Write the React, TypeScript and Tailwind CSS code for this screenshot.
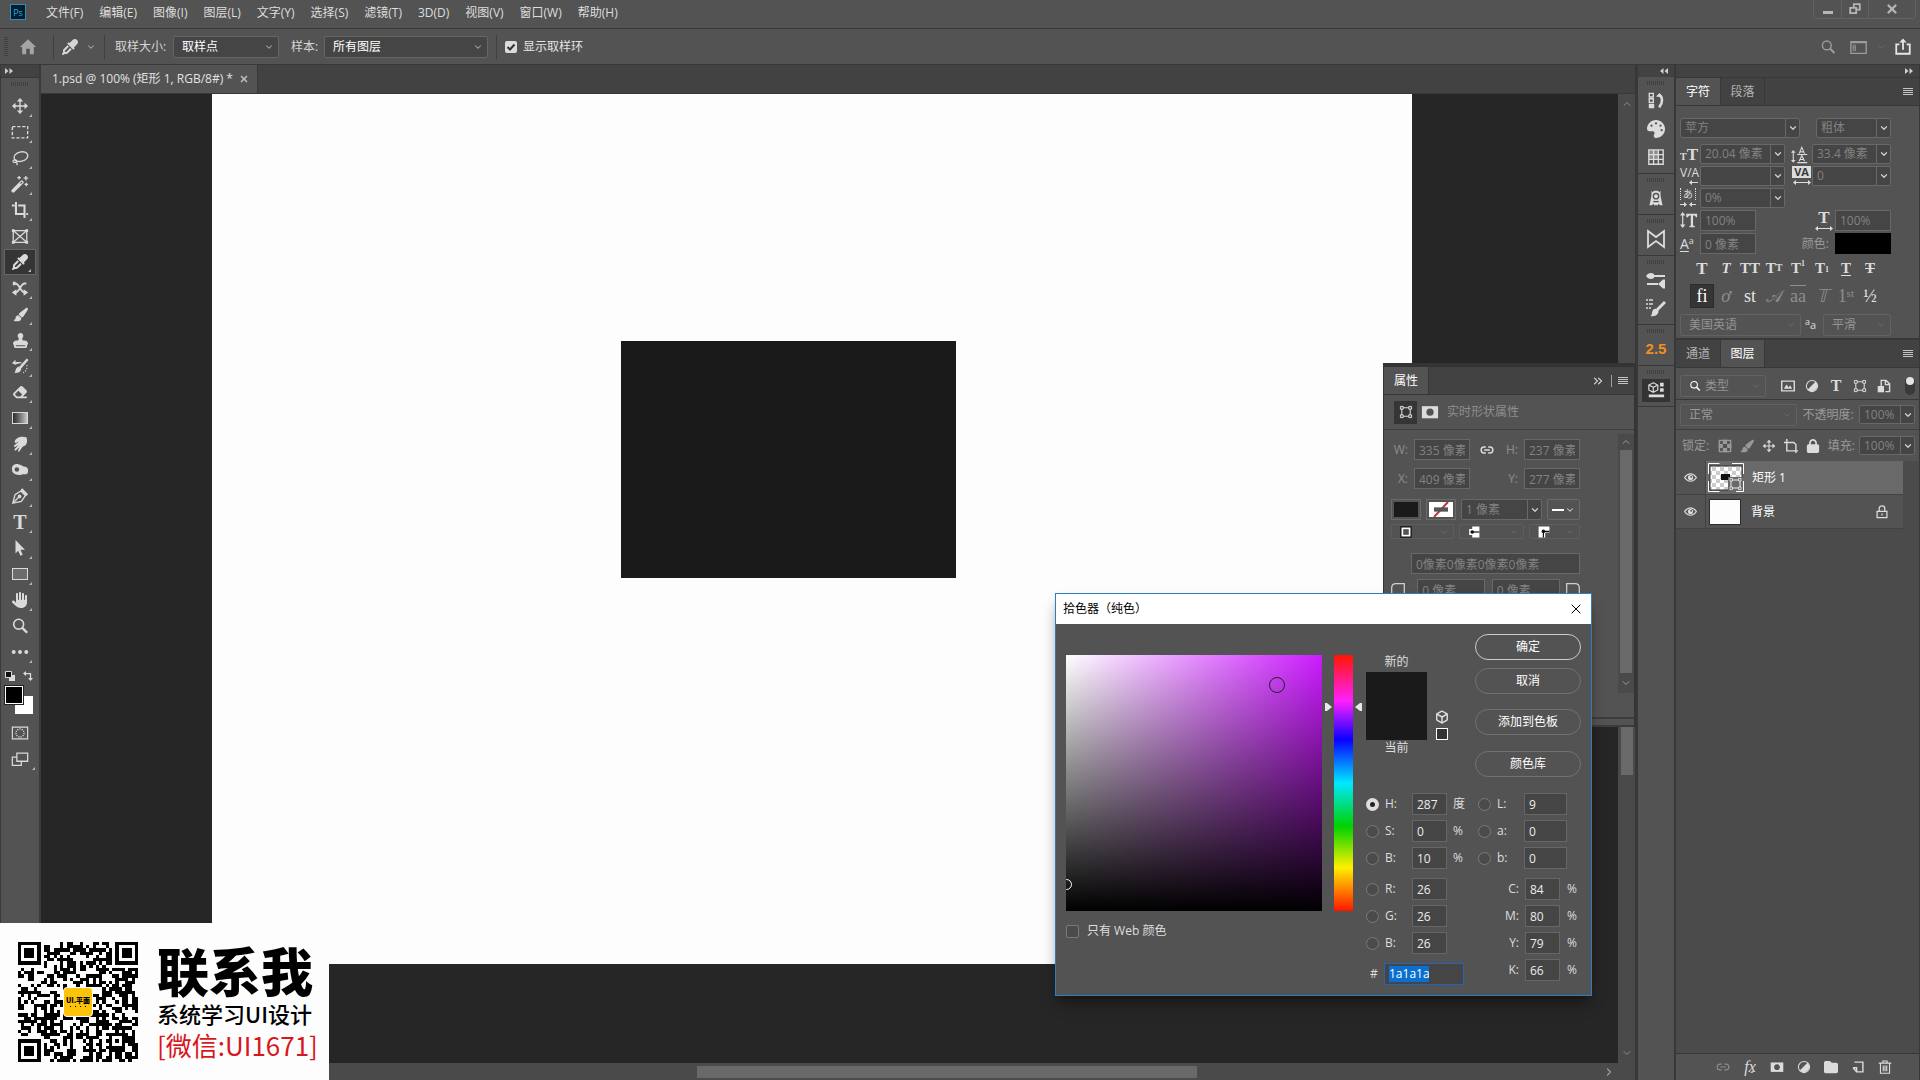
import React from 'react';
import {
  FaEyeDropper,
  FaEraser,
  FaStamp,
  FaHand,
  FaPaintbrush,
  FaPalette,
  FaFolder,
  FaLock,
} from 'react-icons/fa6';
import { ChevronDown, ChevronUp, ChevronRight, ChevronsRight, Link2, Box, X } from 'lucide-react';

type IconProps = { children: React.ReactNode; className?: string };

const Icon = ({ children, className = 'size-5' }: IconProps) => (
  <svg
    viewBox="0 0 20 20"
    fill="none"
    stroke="currentColor"
    strokeWidth="1.5"
    className={`shrink-0 ${className}`}
    aria-hidden="true"
  >
    {children}
  </svg>
);

const menus = [
  '文件(F)', '编辑(E)', '图像(I)', '图层(L)', '文字(Y)', '选择(S)',
  '滤镜(T)', '3D(D)', '视图(V)', '窗口(W)', '帮助(H)',
];

const MoveIcon = ({ className }: { className?: string }) => (
  <Icon className={className}>
    <path d="M10 3v14M3 10h14" />
    <path d="M10 1l3.500 4h-7zM10 19l3.500-4h-7zM1 10l4-3.500v7zM19 10l-4-3.500v7z" fill="currentColor" stroke="none" />
  </Icon>
);

const FrameIcon = ({ className }: { className?: string }) => (
  <Icon className={className}>
    <path d="M4 4h12v12H4z" strokeWidth="1.5" />
    <path d="M2 2h4v4H2zM14 2h4v4h-4zM2 14h4v4H2zM14 14h4v4h-4z" fill="#535353" strokeWidth="1.400" />
  </Icon>
);

const AdjustIcon = ({ className }: { className?: string }) => (
  <Icon className={className}>
    <circle cx="10" cy="10" r="8" />
    <path d="M4.500 15.500A7.800 7.800 0 0 0 15.500 4.500z" fill="currentColor" stroke="none" />
    <path d="M15.500 4.500L4.500 15.500" />
  </Icon>
);

const MaskIcon = ({ className }: { className?: string }) => (
  <Icon className={className}>
    <path d="M1 3.500h18v13.500H1z" fill="currentColor" stroke="none" />
    <circle cx="10" cy="10.200" r="4" fill="#535353" stroke="none" />
  </Icon>
);

const SearchIcon = ({ className }: { className?: string }) => (
  <Icon className={className}>
    <circle cx="8.500" cy="8" r="5.500" strokeWidth="1.800" />
    <path d="M12.500 12l5.500 5.500" strokeWidth="2.600" />
  </Icon>
);

const MenuLines = () => (
  <svg viewBox="0 0 10 8" className="h-2 w-2.5" stroke="#c4c4c4" aria-hidden="true">
    <path d="M0 .5h10M0 2.500h10M0 4.500h10M0 6.500h10" />
  </svg>
);

const DoubleArrow = ({ flip = false }: { flip?: boolean }) => (
  <svg viewBox="0 0 8 6" className={flip ? 'h-1.5 w-2 rotate-180' : 'h-1.5 w-2'} fill="#d0d0d0" aria-hidden="true">
    <path d="M0 0l3.500 3L0 6zM4.500 0L8 3 4.500 6z" />
  </svg>
);

const Grip = () => (
  <div className="mx-auto h-1 w-[18px] bg-[repeating-linear-gradient(90deg,#414141_0_1px,#535353_1px_2px)]" />
);

const CubeIcon = () => <Box className="size-3.5" strokeWidth={2.5} aria-hidden="true" />;

const tools = [
  { name: '移动', icon: <MoveIcon className="size-[18px]" />, more: true },
  {
    name: '矩形选框',
    icon: <Icon className="size-[18px]"><path d="M1.500 4h17v12.500h-17z" strokeDasharray="3.500 2" /></Icon>,
    more: true,
  },
  {
    name: '套索',
    icon: (
      <Icon className="size-[18px]">
        <ellipse cx="11" cy="8.500" rx="7.800" ry="5.200" transform="rotate(-14 11 8.500)" />
        <path d="M5 12c-2 0-3.500 1-2.500 2.200s3 .8 3.500-.3-.3-1.700-1-1.900M6 14c1 1.500 1 3 .3 4" strokeWidth="1.300" />
      </Icon>
    ),
    more: true,
  },
  {
    name: '魔棒',
    icon: (
      <Icon className="size-[18px]">
        <path d="M2.500 17.500L12 8" strokeWidth="4" strokeLinecap="round" />
        <path d="M10.500 9.500l1.800-1.800" stroke="#535353" strokeWidth="1.300" />
        <path d="M9 1v4M7 3h4M16.500 1v5M14 3.500h5M17 8.500v4M15 10.500h4" strokeWidth="1.400" />
      </Icon>
    ),
    more: true,
  },
  {
    name: '裁剪',
    icon: <Icon className="size-[18px]"><path d="M1 5h3M5.500 1v13.500H16M8 5h7v14M17 14.500h2" strokeWidth="2.300" /></Icon>,
    more: true,
  },
  {
    name: '图框',
    icon: (
      <Icon className="size-[18px]">
        <path d="M2.500 4h15v13h-15zM2.500 4l15 13M17.500 4l-15 13" strokeWidth="1.400" />
        <path d="M1 2.500h3v3H1zM16 2.500h3v3h-3zM1 15.500h3v3H1zM16 15.500h3v3h-3z" fill="currentColor" stroke="none" />
      </Icon>
    ),
    more: false,
  },
  { name: '吸管', icon: <FaEyeDropper className="size-4" />, more: true },
  {
    name: '内容感知移动',
    icon: (
      <Icon className="size-[18px]">
        <path d="M3 5h2c4 0 6 10 10 10h2M3 15h2c4 0 6-10 10-10h2" strokeWidth="2" />
        <path d="M14 11.500l5 3.500-5 3.500zM6 11.500L1 15l5 3.500zM2 3h3v4H2z" fill="currentColor" stroke="none" />
      </Icon>
    ),
    more: true,
  },
  { name: '画笔', icon: <FaPaintbrush className="size-[15px]" />, more: true },
  { name: '仿制图章', icon: <FaStamp className="size-[15px]" />, more: true },
  {
    name: '历史记录画笔',
    icon: (
      <Icon className="size-[18px]">
        <path d="M18.500 2.500L10 12" strokeWidth="2.800" />
        <path d="M9.500 11c2 .8 2.500 2.500 1 4.500S5.500 18 3.500 17.500c2-1 1-3 2.500-5 .9-1.200 2-2 3.500-1.500zM1 7l4-4v3c3-1 6-.5 8 1-3-.5-5.500 0-8 1.500z" fill="currentColor" stroke="none" />
        <path d="M17.500 9c1 4-1 7-4 8.500" strokeDasharray="1.300 1.700" strokeWidth="1.300" />
      </Icon>
    ),
    more: true,
  },
  { name: '橡皮擦', icon: <FaEraser className="size-4" />, more: true },
  { name: '渐变', icon: <span className="block h-3 w-4 border border-[#dadada] bg-linear-to-r from-[#2d2d2d] to-[#c8c8c8]" />, more: true },
  {
    name: '涂抹',
    icon: (
      <Icon className="size-[18px]">
        <path d="M7 3.500c3-2 7-1.800 10-1 1.500 3 1 6.500-.5 8.500-2 1.500-3.500 1.500-4 2.500L9 18.500 7.500 18l2-4.500-4.500 4L3.500 16l5-5-4.500 2.500L3 12l5.500-4.500c-2 .5-3 1.500-4.500 1C4 6 5 4.500 7 3.500z" fill="currentColor" stroke="none" />
      </Icon>
    ),
    more: true,
  },
  {
    name: '海绵',
    icon: (
      <Icon className="size-[18px]">
        <path d="M1 9c0-4 3-6 7-5.500 3 .4 5 2.500 8 3 2 .5 3 2 3 4.500s-1.500 4-4 3.700c-2-.2-3 .8-6 .8-5 0-8-2.500-8-6.500z" fill="currentColor" stroke="none" />
        <circle cx="6.500" cy="9.500" r="2.500" fill="#535353" stroke="none" />
      </Icon>
    ),
    more: true,
  },
  {
    name: '钢笔',
    icon: (
      <Icon className="size-[18px]">
        <path d="M2 18L4.500 8.500 11 4.500l5 5L11.500 16z" />
        <path d="M2.500 17.500l6-6" />
        <circle cx="9.500" cy="10.500" r="1.300" fill="currentColor" />
        <path d="M12.500 1.500l6.500 6.500-2 2L10.500 3.500z" fill="currentColor" stroke="none" />
      </Icon>
    ),
    more: true,
  },
  { name: '横排文字', icon: <span className="font-['Liberation_Serif',serif] text-xl leading-5 font-bold">T</span>, more: true },
  {
    name: '路径选择',
    icon: <Icon className="size-[18px]"><path d="M5 1l10.500 11h-5l2.500 5.500-2.500 1.200L8 13l-3 3z" fill="currentColor" stroke="none" /></Icon>,
    more: true,
  },
  { name: '矩形', icon: <span className="block h-3 w-4 border border-[#dadada] bg-[#6c6c6c]" />, more: true },
  { name: '抓手', icon: <FaHand className="size-4" />, more: true },
  { name: '缩放', icon: <SearchIcon className="size-[18px]" />, more: false },
  {
    name: '编辑工具栏',
    icon: (
      <Icon className="size-[18px]">
        <circle cx="3" cy="10" r="2.200" fill="currentColor" stroke="none" />
        <circle cx="10" cy="10" r="2.200" fill="currentColor" stroke="none" />
        <circle cx="17" cy="10" r="2.200" fill="currentColor" stroke="none" />
      </Icon>
    ),
    more: true,
  },
];

const Corner = () => (
  <svg viewBox="0 0 4 4" className="absolute right-1 bottom-0.5 size-[3px]" fill="#b8b8b8" aria-hidden="true">
    <path d="M4 0v4H0z" />
  </svg>
);

type FieldProps = { label: string; value: string; className: string };

const Field = ({ label, value, className }: FieldProps) => (
  <input
    aria-label={label}
    defaultValue={value}
    className={`min-w-0 border border-[#686868] bg-[#454545] px-1 text-xs text-[#828282] outline-none ${className}`}
  />
);

// editable value with a drop-down arrow at its right end
const Combo = ({ label, value, className }: FieldProps) => (
  <div className={`flex rounded-xs border border-[#686868] bg-[#454545] ${className}`}>
    <input
      aria-label={label}
      defaultValue={value}
      className="w-full min-w-0 flex-1 bg-transparent px-1 text-xs text-[#828282] outline-none"
    />
    <button aria-label={`${label}选项`} className="flex w-3.5 shrink-0 items-center justify-center border-l border-[#686868] text-[#cfcfcf]">
      <ChevronDown className="size-2.5" strokeWidth={3} />
    </button>
  </div>
);

type SelectProps = { label: string; value?: string; className: string; arrow?: string; children?: React.ReactNode };

const Select = ({ label, value = '', className, arrow = 'text-[#666666]', children }: SelectProps) => (
  <div className={`relative flex items-center rounded-xs border ${className}`}>
    {children}
    <select aria-label={label} className="h-full w-full min-w-0 flex-1 appearance-none bg-transparent outline-none">
      <option>{value}</option>
    </select>
    <ChevronDown className={`pointer-events-none absolute right-1 size-2.5 ${arrow}`} strokeWidth={2.5} />
  </div>
);

const MenuBar = () => (
  <header className="flex h-[29px] shrink-0 items-start border-b border-[#383838]">
    <div className="mt-1 ml-2.5 flex h-4 w-4 items-center justify-center border border-[#2c8fc0] bg-[#001d2c] text-[9px] leading-none text-[#31a8e0]">
      Ps
    </div>
    <nav className="ml-5 flex gap-4">
      {menus.map((menu) => (
        <button key={menu} className="h-[25px] text-[#dedede]">{menu}</button>
      ))}
    </nav>
    <div className="mr-1 ml-auto flex h-[19px] rounded-b-sm border border-t-0 border-[#626262] text-[#b5b5b5]">
      <button aria-label="最小化" className="flex w-7 items-center justify-center border-r border-[#626262]">
        <span className="mt-1.5 h-[3px] w-2.5 bg-[#b5b5b5]" />
      </button>
      <button aria-label="还原" className="flex w-[27px] items-center justify-center border-r border-[#626262]">
        <Icon className="size-3">
          <path d="M8 2h10v9H8z" strokeWidth="3" />
          <path d="M2 8h10v9H2z" fill="#535353" strokeWidth="3" />
        </Icon>
      </button>
      <button aria-label="关闭" className="flex w-[46px] items-center justify-center">
        <X className="size-3.5" strokeWidth={4} />
      </button>
    </div>
  </header>
);

const OptionsBar = () => (
  <div className="flex h-9 shrink-0 items-center border-b border-[#383838] text-[#d6d6d6]">
    <div className="ml-1 h-5 w-1 bg-[repeating-linear-gradient(180deg,#414141_0_1px,#535353_1px_2px)]" />
    <button aria-label="主页" className="ml-[11px] text-[#a5a5a5]">
      <Icon className="size-[18px]"><path d="M10 1.500L1 10h2.500v8h4.500v-6h4v6h4.500v-8H19z" fill="currentColor" stroke="none" /></Icon>
    </button>
    <div className="ml-4 h-6 border-l border-[#404040]" />
    <button aria-label="吸管预设" className="ml-2 flex items-center">
      <FaEyeDropper className="size-4" />
      <ChevronDown className="ml-2 size-2.5 text-[#a8a8a8]" strokeWidth={2.5} />
    </button>
    <div className="ml-2 h-6 border-l border-[#404040]" />
    <span className="ml-2.5 w-[58px]">取样大小:</span>
    <Select label="取样大小" value="取样点" className="h-[22px] w-[106px] border-[#666666] bg-[#454545] pl-2 text-white" arrow="text-[#a8a8a8]" />
    <span className="ml-3 w-[33px]">样本:</span>
    <Select label="样本" value="所有图层" className="h-[22px] w-[164px] border-[#666666] bg-[#454545] pl-2 text-white" arrow="text-[#a8a8a8]" />
    <div className="ml-2 h-6 border-l border-[#404040]" />
    <label className="ml-2 flex items-center gap-1.5 text-[#e4e4e4]">
      <span className="relative flex size-3">
        <input type="checkbox" defaultChecked className="size-3 appearance-none rounded-xs bg-[#dcdcdc]" />
        <svg viewBox="0 0 12 12" className="pointer-events-none absolute inset-0" fill="none" stroke="#333" strokeWidth="2" aria-hidden="true">
          <path d="M2.500 6l2.500 2.500 4.500-5" />
        </svg>
      </span>
      显示取样环
    </label>
    <div className="mr-2 ml-auto flex items-center">
      <button aria-label="搜索" className="text-[#9c9c9c]"><SearchIcon className="size-4" /></button>
      <button aria-label="工作区" className="ml-3.5 flex items-center text-[#9c9c9c]">
        <Icon className="size-[18px]">
          <path d="M1 4h17v13H1zM1 5h17" />
          <path d="M3.500 8h2.500v6H3.500zM3.500 11H6" strokeWidth="1" />
        </Icon>
        <ChevronDown className="ml-2 size-2.5 text-[#666666]" strokeWidth={2.5} />
      </button>
      <button aria-label="共享" className="ml-2 text-[#e6e6e6]">
        <Icon className="size-[18px]">
          <path d="M6 7H2.500v10.500h15V7H14M10 13V3" strokeWidth="2" />
          <path d="M10 .5l4 4.500H6z" fill="currentColor" stroke="none" />
        </Icon>
      </button>
    </div>
  </div>
);

const ToolBar = () => (
  <aside className="flex w-[41px] shrink-0 flex-col border-r-2 border-l border-[#3a3a3a] text-[#dadada]">
    <div className="flex h-3 items-center bg-[#424242] pl-1"><DoubleArrow /></div>
    <div className="flex h-4 items-start border-t border-[#383838] pt-1"><Grip /></div>
    {tools.map((tool) => (
      <button
        key={tool.name}
        aria-label={tool.name}
        className={
          tool.name === '吸管'
            ? 'relative ml-[3px] flex h-[26px] w-8 items-center justify-center border border-[#656565] bg-[#353535]'
            : 'relative ml-[3px] flex h-[26px] w-8 items-center justify-center'
        }
      >
        {tool.icon}
        {tool.more && <Corner />}
      </button>
    ))}
    <div className="flex justify-between pt-1.5 pr-1.5 pl-1">
      <button aria-label="默认颜色">
        <Icon className="size-2.5">
          <path d="M8 8h12v12H8z" fill="currentColor" stroke="none" />
          <path d="M1 1h12v12H1z" fill="#111" strokeWidth="2" />
        </Icon>
      </button>
      <button aria-label="切换颜色">
        <Icon className="size-2.5">
          <path d="M4 5h11v11" strokeWidth="2.500" />
          <path d="M0 5l6-5v10zM15 20l-5-6h10z" fill="currentColor" stroke="none" />
        </Icon>
      </button>
    </div>
    <div className="relative mt-[5px] ml-1 h-7 w-7">
      <button aria-label="背景色" className="absolute right-0 bottom-0 size-[18px] bg-white" />
      <button aria-label="前景色" className="absolute top-0 left-0 size-[18px] border border-white bg-black outline outline-[#222222]" />
    </div>
    <button aria-label="快速蒙版" className="mt-1.5 flex h-[26px] items-center justify-center">
      <Icon className="size-[18px]">
        <path d="M1.500 3.500h17v13h-17z" strokeWidth="1.300" />
        <circle cx="10" cy="10" r="4.500" strokeDasharray="1.300 1.200" />
      </Icon>
    </button>
    <button aria-label="屏幕模式" className="relative flex h-[26px] items-center justify-center">
      <Icon className="size-[18px]">
        <path d="M1.500 8h10v9h-10z" strokeWidth="1.400" />
        <path d="M6.500 3.500h12v9h-12z" fill="#535353" strokeWidth="1.400" />
      </Icon>
      <Corner />
    </button>
  </aside>
);

const Canvas = () => (
  <main className="flex min-w-0 flex-1 flex-col">
    <div className="flex h-[29px] shrink-0 items-stretch border-b border-[#383838] bg-[#424242]">
      <div className="flex w-[217px] items-center border-r border-[#383838] bg-[#535353] pl-[11px] text-[#e2e2e2]">
        <span className="whitespace-nowrap">1.psd @ 100% (矩形 1, RGB/8#) *</span>
        <button aria-label="关闭文档" className="ml-1.5"><X className="size-2.5 text-[#bbbbbb]" strokeWidth={4} /></button>
      </div>
    </div>
    <div className="flex min-h-0 flex-1">
      <div className="relative min-w-0 flex-1 overflow-hidden bg-[#262626]">
        <div className="absolute top-0 left-[171px] h-[870px] w-[1200px] bg-[#fdfdfd]">
          <div className="absolute top-[247px] left-[409px] h-[237px] w-[335px] bg-[#1a1a1a]" />
        </div>
      </div>
      <div className="flex w-[17px] shrink-0 flex-col items-center bg-[#4a4a4a] py-1 text-[#8c8c8c]">
        <ChevronUp className="size-3" />
        <div className="grow-[42]" />
        <div className="w-3 grow-[29] bg-[#696969]" />
        <div className="grow-[29]" />
        <ChevronDown className="size-3" />
      </div>
    </div>
    <div className="flex h-[17px] shrink-0 items-center bg-[#4a4a4a]">
      <div className="min-w-0 flex-1">
        <div className="ml-[42%] h-3 w-[32%] bg-[#696969]" />
      </div>
      <ChevronRight className="mr-5 size-3 text-[#9a9a9a]" strokeWidth={2.5} />
    </div>
  </main>
);

const dock = [
  [
    {
      name: '历史记录',
      icon: (
        <Icon className="size-[18px]">
          <path d="M2.500 1.500h4.500v4H2.500zM2.500 7.500h4.500v4H2.500z" />
          <path d="M2 13h6v5H2zM10 5l4-4 4 5z" fill="currentColor" stroke="none" />
          <path d="M13.500 3c4 3 4.500 9 0 14" strokeWidth="2.800" />
        </Icon>
      ),
    },
    { name: '颜色', icon: <FaPalette className="size-[18px] -scale-x-100" /> },
    {
      name: '色板',
      icon: (
        <Icon className="size-[18px]">
          <path d="M2 2h10.500v10H2z" fill="#8c8c8c" stroke="none" />
          <path d="M2 2h16v16H2zM7.300 2v16M12.600 2v16M2 7.300h16M2 12.600h16" />
        </Icon>
      ),
    },
  ],
  [
    {
      name: '插件',
      icon: (
        <Icon className="size-[18px]">
          <path d="M5 2l1 1.500c2-2 6-2 8 0L15 2v5l1.500 8 1 3h-3l-1.500-1.500L12 18H8l-1-1.500L5.500 18h-3l1-3L5 7z" fill="currentColor" stroke="none" />
          <circle cx="10" cy="8" r="3" stroke="#535353" />
          <path d="M7 14h6" stroke="#535353" />
        </Icon>
      ),
    },
  ],
  [
    {
      name: '蝴蝶结',
      icon: <Icon className="size-5"><path d="M2 2l8 6 8-6v16l-8-6-8 6z" strokeWidth="1.800" /></Icon>,
    },
  ],
  [
    {
      name: '画笔设置',
      icon: (
        <Icon className="size-5">
          <path d="M8 6h11M1 14h11" strokeWidth="2" />
          <path d="M0 6c2-3 5-4 8-2v4c-3 2-6 1-8-2zM12 14l5-4.500h2v9h-2z" fill="currentColor" stroke="none" />
        </Icon>
      ),
    },
    {
      name: '画笔',
      icon: (
        <Icon className="size-5">
          <path d="M0 2h2M3 2h4M0 6h2M3 6h4M0 10h2M3 10h2" strokeWidth="1.500" />
          <path d="M19 4l-8 8" strokeWidth="3" />
          <path d="M10 11c3 1 3 3 1.500 5S7 18.500 4.500 18c2-1 1-3 2-5s2-2.500 3.500-2z" fill="currentColor" stroke="none" />
        </Icon>
      ),
    },
  ],
  [{ name: '2.5', icon: <span className="font-['Liberation_Sans',sans-serif] text-[15px] font-bold text-[#ef8f1d]">2.5</span> }],
  [
    {
      name: '属性',
      icon: (
        <span className="flex h-[23px] w-7 items-center justify-center bg-[#343434]">
          <Icon className="size-[18px]">
            <path d="M7 2l5 2.500v5.500l-5 2.500-5-2.500V4.500zM2 4.500L7 7l5-2.500M7 7v5.500" strokeWidth="1.300" />
            <path d="M14.500 2h4v4h-4zM14.500 8h4v4h-4zM2 15h17v3H2z" fill="currentColor" stroke="none" />
          </Icon>
        </span>
      ),
    },
  ],
];

const IconDock = () => (
  <aside className="w-[38px] shrink-0 border-r-2 border-[#383838] text-[#dcdcdc]">
    <div className="flex h-3 items-center justify-end bg-[#424242] pr-1.5"><DoubleArrow flip /></div>
    {dock.map((group) => (
      <div key={group[0].name} className="border-b border-[#383838] pt-1 pb-0.5">
        <Grip />
        <div className="pt-0.5">
          {group.map((item) => (
            <button key={item.name} aria-label={item.name} className="flex h-7 w-full items-center justify-center">
              {item.icon}
            </button>
          ))}
        </div>
      </div>
    ))}
  </aside>
);

const textStyles = [
  { name: '仿粗体', node: <b className="text-[17px]">T</b> },
  { name: '仿斜体', node: <i>T</i> },
  { name: '全部大写', node: 'TT' },
  { name: '小型大写', node: <>T<span className="text-[10px]">T</span></> },
  { name: '上标', node: <>T<sup className="text-[8px]">1</sup></> },
  { name: '下标', node: <>T<sub className="text-[8px]">1</sub></> },
  { name: '下划线', node: <u className="underline-offset-2">T</u> },
  { name: '删除线', node: <s>T</s> },
];

const openType = [
  { name: '标准连字', text: 'fi', style: 'border border-[#2c2c2c] bg-[#353535] text-white' },
  { name: '上下文替代字', text: 'ơ', style: 'text-[#8e8e8e] italic' },
  { name: '自由连字', text: 'st', style: 'text-[#e4e4e4]' },
  { name: '花饰字', text: '𝒜', style: 'text-[#8e8e8e]' },
  { name: '文体替代字', text: 'aa', style: 'text-[#8e8e8e] overline' },
  { name: '标题替代字', text: '𝕋', style: 'text-[#8e8e8e] italic' },
  { name: '序数字', text: '1ˢᵗ', style: 'text-[#8e8e8e]' },
  { name: '分数字', text: '½', style: 'text-[#e4e4e4]' },
];

const glyph = "font-['Liberation_Serif',serif] font-bold leading-none";

const CharacterPanel = () => (
  <section>
    <div className="flex h-7 items-stretch border-b border-[#383838] bg-[#424242]">
      <button className="w-[45px] border-r border-[#383838] bg-[#535353] text-white">字符</button>
      <button className="w-11 border-r border-[#383838] text-[#b2b2b2]">段落</button>
      <button aria-label="面板菜单" className="mr-1.5 ml-auto"><MenuLines /></button>
    </div>
    <div className="px-1 pt-3 pr-7 text-[#dcdcdc]">
      <div className="flex justify-between">
        <Combo label="字体" value="苹方" className="h-5 w-[120px]" />
        <Combo label="字重" value="粗体" className="h-5 w-[75px]" />
      </div>
      <div className="mt-1.5 grid grid-cols-[20px_85px_27px_79px] gap-y-[2px]">
        <span className={`${glyph} pt-0.5 text-[17px]`}><span className="text-[10px]">T</span>T</span>
        <Combo label="字号" value="20.04 像素" className="h-5" />
        <Icon className="mt-0.5 ml-1.5 size-[18px]">
          <path d="M2.500 7v9M9 8.500l3-7 3 7M10 6.500h4M9 17l3-6.500 3 6.500M10 15h4M7 9.500h11M7 18.500h11" strokeWidth="1.200" />
          <path d="M2.500 4.500l2.500 3H0zM2.500 18.500l2.500-3H0z" fill="currentColor" stroke="none" />
        </Icon>
        <Combo label="行距" value="33.4 像素" className="h-5" />
        <span className="flex flex-col text-xs leading-3.5">
          V/A
          <svg viewBox="0 0 18 5" className="h-[5px] w-[18px]" fill="currentColor" aria-hidden="true"><path d="M9 2.500L12 0v2h6v1h-6v2z" /></svg>
        </span>
        <Combo label="字偶间距" value="" className="h-5" />
        <span className="ml-1.5 flex flex-col items-center">
          <b className="bg-[#dcdcdc] px-0.5 text-[11px] leading-3 text-[#3a3a3a]">VA</b>
          <svg viewBox="0 0 18 5" className="mt-0.5 h-[5px] w-[18px]" fill="currentColor" aria-hidden="true"><path d="M0 2.500L3 0v2h12V0l3 2.500L15 5V3H3v2z" /></svg>
        </span>
        <Combo label="字距" value="0" className="h-5" />
        <span className="flex w-4 flex-col items-center">
          <span className="w-4 border-x border-dotted border-[#dcdcdc] text-center text-[10px] leading-3">あ</span>
          <svg viewBox="0 0 16 5" className="mt-0.5 h-[5px] w-4" fill="currentColor" aria-hidden="true"><path d="M7 2.500L4 0v2H0v1h4v2zM9 2.500L12 0v2h4v1h-4v2z" /></svg>
        </span>
        <Combo label="比例间距" value="0%" className="h-5" />
      </div>
      <div className="mt-px flex items-center">
        <Icon className="size-[18px]">
          <path d="M3 4v12" strokeWidth="1.300" />
          <path d="M3 1l3 4H0zM3 19l3-4H0zM7 3h12v4h-1.500c0-1.500-.7-2-3-2v11l2 1v1h-6v-1l1.500-1V5c-2 0-3 .5-3 2H7z" fill="currentColor" stroke="none" />
        </Icon>
        <Field label="垂直缩放" value="100%" className="ml-0.5 h-[21px] w-14" />
        <span className="ml-auto flex flex-col items-center">
          <b className={`${glyph} text-[17px]`}>T</b>
          <svg viewBox="0 0 18 5" className="h-[5px] w-[18px]" fill="currentColor" aria-hidden="true"><path d="M0 2.500L3 0v2h12V0l3 2.500L15 5V3H3v2z" /></svg>
        </span>
        <Field label="水平缩放" value="100%" className="ml-0.5 h-[21px] w-14" />
      </div>
      <div className="mt-[2px] flex items-center">
        <span className="w-5 text-sm leading-4"><u className="underline-offset-2">A</u><sup className="text-[9px]">a</sup></span>
        <Field label="基线偏移" value="0 像素" className="h-[21px] w-14" />
        <span className="mr-1.5 ml-auto text-[#999999]">颜色:</span>
        <button aria-label="文字颜色" className="h-[21px] w-14 bg-black" />
      </div>
      <div className={`mt-1 ml-2.5 grid w-48 grid-cols-8 text-[15px] ${glyph}`}>
        {textStyles.map((item) => (
          <button key={item.name} aria-label={item.name} className="flex h-5 items-center justify-center">{item.node}</button>
        ))}
      </div>
      <div className="mt-1.5 ml-2.5 grid w-48 grid-cols-8 font-['Liberation_Serif','DejaVu_Serif',serif] text-lg leading-none">
        {openType.map((item) => (
          <button key={item.name} aria-label={item.name} className={`flex h-6 items-center justify-center ${item.style}`}>{item.text}</button>
        ))}
      </div>
      <div className="mt-1.5 flex h-[22px] items-center text-[#949494]">
        <Select label="语言" value="美国英语" className="h-[22px] w-[121px] border-[#626262] pl-2" />
        <span className="ml-1 text-[11px] leading-3 text-[#dcdcdc]"><sup className="text-[9px]">a</sup>a</span>
        <Select label="消除锯齿" value="平滑" className="ml-auto h-[22px] w-[68px] border-[#626262] pl-2" />
      </div>
    </div>
  </section>
);

const Eye = () => (
  <Icon className="size-[13px]">
    <path d="M1 10c5-7.500 13-7.500 18 0-5 7.500-13 7.500-18 0z" strokeWidth="2" />
    <circle cx="10" cy="10" r="4" fill="currentColor" stroke="none" />
    <circle cx="11" cy="9" r="1.500" fill="#535353" stroke="none" />
  </Icon>
);

const LayersPanel = () => (
  <section className="mt-0.5 flex min-h-0 flex-1 flex-col border-t-2 border-[#383838] text-[#dcdcdc]">
    <div className="flex h-7 shrink-0 items-stretch border-b border-[#383838] bg-[#424242]">
      <button className="w-[45px] border-r border-[#383838] text-[#b2b2b2]">通道</button>
      <button className="w-11 border-r border-[#383838] bg-[#535353] text-white">图层</button>
      <button aria-label="面板菜单" className="mr-1.5 ml-auto"><MenuLines /></button>
    </div>
    <div className="flex h-8 shrink-0 items-center border-b border-[#383838] pt-1 pl-1">
      <Select label="图层类型" value="类型" className="h-[22px] w-[86px] border-[#626262] pl-2 text-[#949494]">
        <SearchIcon className="mr-1 size-3 text-white" />
      </Select>
      <div className="ml-[15px] flex items-center gap-2.5">
        <button aria-label="像素图层"><Icon className="size-3.5"><path d="M1 3h18v14H1z" strokeWidth="2" /><path d="M4 14l4-6 3 4 2-3 3 5z" fill="currentColor" stroke="none" /></Icon></button>
        <button aria-label="调整图层"><AdjustIcon className="size-3.5" /></button>
        <button aria-label="文字图层" className={`${glyph} w-3.5 text-base`}>T</button>
        <button aria-label="形状图层"><FrameIcon className="size-3.5" /></button>
        <button aria-label="智能对象"><Icon className="size-3.5"><path d="M6 10V2h7l5 5v11h-6M12 2v6h6" strokeWidth="2" /><path d="M1 10h9v9H1z" fill="currentColor" stroke="none" /></Icon></button>
      </div>
      <button aria-label="打开图层过滤" className="mr-1 ml-auto flex h-[18px] w-2.5 justify-center rounded-full bg-[#3a3a3a]">
        <span className="size-2 rounded-full bg-[#e4e4e4]" />
      </button>
    </div>
    <div className="flex h-[30px] shrink-0 items-center justify-between border-b border-[#3e3e3e] pr-1 pl-1 text-[#999999]">
      <Select label="混合模式" value="正常" className="h-[22px] w-[117px] border-[#626262] pl-2" />
      <span>不透明度:</span>
      <Combo label="不透明度" value="100%" className="h-[19px] w-14" />
    </div>
    <div className="flex h-[31px] shrink-0 items-center pr-1 pl-1.5 text-[#999999]">
      <span className="w-9">锁定:</span>
      <div className="flex items-center gap-2 text-[#dcdcdc]">
        <button aria-label="锁定透明像素" className="text-[#999999]">
          <Icon className="size-3.5">
            <path d="M2 2h16v16H2z" strokeWidth="2" />
            <path d="M7 1h6v6H7zM1 7h6v6H1zM13 7h6v6h-6zM7 13h6v6H7z" fill="currentColor" stroke="none" />
          </Icon>
        </button>
        <button aria-label="锁定图像像素" className="text-[#999999]"><FaPaintbrush className="size-3.5" /></button>
        <button aria-label="锁定位置"><MoveIcon className="size-3.5" /></button>
        <button aria-label="防止自动嵌套"><Icon className="size-3.5"><path d="M0 5h14l3 3v12M4 0v17h16" strokeWidth="2" /></Icon></button>
        <button aria-label="锁定全部"><FaLock className="size-3.5" /></button>
      </div>
      <span className="mr-1 ml-auto">填充:</span>
      <Combo label="填充" value="100%" className="h-[19px] w-14" />
    </div>
    <ul className="min-h-0 flex-1 bg-[#4b4b4b]">
      <li className="mr-4 flex h-[34px] items-stretch border-b border-[#424242] bg-[#535353]">
        <button aria-label="切换矩形 1 可见性" className="flex w-[30px] items-center justify-center border-r border-[#424242]"><Eye /></button>
        <div className="flex flex-1 items-center bg-[#696969] pl-0.5 text-white">
          <svg viewBox="0 0 36 29" className="mr-2 h-[29px] w-9" fill="none" aria-hidden="true">
            <defs>
              <pattern id="checker" width="8" height="8" patternUnits="userSpaceOnUse">
                <path d="M0 0h8v8H0z" fill="#fff" />
                <path d="M0 0h4v4H0zM4 4h4v4H4z" fill="#ccc" />
              </pattern>
            </defs>
            <path d="M2 3h32v24H2z" fill="url(#checker)" stroke="#333" />
            <path d="M13 11h9v6h-9z" fill="#111" />
            <path d="M20 14h15v14H20z" fill="#696969" />
            <path d="M23 17h9v8h-9z" stroke="#eee" />
            <path d="M22 15.500h2.500v2.500H22zM30.500 15.500H33v2.500h-2.500zM22 24h2.500v2.500H22zM30.500 24H33v2.500h-2.500z" fill="#696969" stroke="#eee" strokeWidth=".8" />
            <path d="M.5 11V.5h11M24 .5h11.500V11M.5 18v10.500h11M35.500 18v10.500H28" stroke="#fff" />
          </svg>
          矩形 1
        </div>
      </li>
      <li className="mr-4 flex h-[34px] items-center border-b border-[#424242] bg-[#535353] text-white">
        <button aria-label="切换背景可见性" className="flex h-full w-[30px] items-center justify-center border-r border-[#424242] text-[#dcdcdc]"><Eye /></button>
        <span className="mr-2.5 ml-[3px] h-[26px] w-8 border border-[#2c2c2c] bg-[#fdfdfd]" />
        背景
        <Icon className="mr-3.5 ml-auto size-3.5 text-[#dcdcdc]"><path d="M3 9h14v9H3zM6 9V5c0-5 8-5 8 0v4M10 12v3" strokeWidth="1.800" /></Icon>
      </li>
    </ul>
    <div className="flex h-[27px] shrink-0 items-center justify-end gap-[13px] border-t border-[#383838] pr-[27px]">
      <button aria-label="链接图层" className="text-[#8c8c8c]"><Link2 className="size-3.5" /></button>
      <button aria-label="图层样式" className="relative w-3.5 font-['Liberation_Serif',serif] text-base leading-none italic">fx<Corner /></button>
      <button aria-label="添加蒙版"><MaskIcon className="size-3.5" /></button>
      <button aria-label="新建调整图层"><AdjustIcon className="size-3.5" /></button>
      <button aria-label="新建组"><FaFolder className="size-3.5" /></button>
      <button aria-label="新建图层"><Icon className="size-3.5"><path d="M5 3h12v14H8v-6H3M3 11l5 6" strokeWidth="2" /></Icon></button>
      <button aria-label="删除图层"><Icon className="size-3.5"><path d="M1 4.500h18M7 4V1.500h6V4M3.500 5v14h13V5M7.500 8v8M10 8v8M12.500 8v8" strokeWidth="1.600" /></Icon></button>
    </div>
  </section>
);

const PropertiesPanel = () => (
  <section className="absolute top-[363px] left-[1383px] flex h-[364px] w-[253px] flex-col border-t-4 border-r-2 border-l border-[#343434] bg-[#535353] text-[#8e8e8e]">
    <div className="flex h-7 shrink-0 items-stretch border-b border-[#383838] bg-[#424242]">
      <button className="w-[45px] border-r border-[#383838] bg-[#535353] text-white">属性</button>
      <div className="mr-1.5 ml-auto flex items-center gap-1.5">
        <button aria-label="折叠"><ChevronsRight className="size-3.5 text-[#d8d8d8]" /></button>
        <span className="h-3 border-l border-[#a0a0a0]" />
        <button aria-label="面板菜单"><MenuLines /></button>
      </div>
    </div>
    <div className="flex h-[35px] shrink-0 items-center border-b border-[#3e3e3e] pl-2.5 text-[#dcdcdc]">
      <button aria-label="形状属性" className="flex size-[23px] items-center justify-center bg-[#353535]"><FrameIcon className="size-3.5" /></button>
      <button aria-label="蒙版属性" className="ml-1"><MaskIcon className="size-[18px]" /></button>
      <span className="ml-2 text-[#8e8e8e]">实时形状属性</span>
    </div>
    <div className="flex min-h-0 flex-1">
      <div className="min-w-0 flex-1 pt-[9px] pr-[38px] pl-[7px]">
        <div className="flex items-center">
          <span className="w-[17px] text-right">W:</span>
          <Field label="宽度" value="335 像素" className="ml-1.5 h-[21px] w-14" />
          <button aria-label="链接宽高" className="ml-2.5 text-[#dcdcdc]"><Link2 className="size-3.5" strokeWidth={2.5} /></button>
          <span className="ml-auto">H:</span>
          <Field label="高度" value="237 像素" className="ml-1.5 h-[21px] w-14" />
        </div>
        <div className="mt-2 flex items-center">
          <span className="w-[17px] text-right">X:</span>
          <Field label="横坐标" value="409 像素" className="ml-1.5 h-[21px] w-14" />
          <span className="ml-auto">Y:</span>
          <Field label="纵坐标" value="277 像素" className="ml-1.5 h-[21px] w-14" />
        </div>
        <div className="mt-2.5 flex h-[21px] items-stretch justify-between">
          <button aria-label="填充" className="w-[30px] border border-[#6a6a6a] bg-[#535353] p-0.5"><span className="block h-full bg-[#1a1a1a]" /></button>
          <button aria-label="描边" className="w-[30px] border border-[#6a6a6a] p-0.5">
            <svg viewBox="0 0 24 14" className="size-full" preserveAspectRatio="none" aria-hidden="true">
              <path d="M0 0h24v14H0z" fill="#fff" />
              <path d="M5 14L19 0" stroke="#c8323c" strokeWidth="2" />
              <path d="M5 5h14v4H5z" fill="#555" />
            </svg>
          </button>
          <Combo label="描边宽度" value="1 像素" className="w-[81px]" />
          <Select label="描边类型" className="w-[33px] border-[#6a6a6a]" arrow="text-[#cfcfcf]">
            <span className="ml-1 h-0.5 w-3 shrink-0 bg-white" />
          </Select>
        </div>
        <div className="mt-1 flex h-[15px] items-stretch justify-between text-white">
          <Select label="描边对齐" className="w-[63px] border-[#5e5e5e]">
            <Icon className="ml-2 size-3"><path d="M3 3h14v14H3z" stroke="#111" strokeWidth="5" /><path d="M4 4h12v12H4z" strokeWidth="3" /></Icon>
          </Select>
          <Select label="描边端点" className="w-[65px] border-[#5e5e5e]">
            <Icon className="ml-2 size-3"><path d="M7 1h12v18H7zM2 5h5v10H2z" fill="currentColor" stroke="none" /><path d="M7 10h12" stroke="#111" strokeWidth="2" /><circle cx="7" cy="10" r="3" fill="#111" stroke="none" /></Icon>
          </Select>
          <Select label="描边角点" className="w-[51px] border-[#5e5e5e]">
            <Icon className="ml-2 size-3"><path d="M1 1h18v10h-7v8H1z" fill="currentColor" stroke="none" /><path d="M9 19V9h10" stroke="#111" strokeWidth="2" /><circle cx="9" cy="9" r="3" fill="#111" stroke="none" /></Icon>
          </Select>
        </div>
        <div className="mt-3.5 ml-5">
          <Field label="圆角半径" value="0像素0像素0像素0像素" className="h-[21px] w-full" />
        </div>
        <div className="mt-[5px] flex items-center justify-between text-[#cfcfcf]">
          <Icon className="size-3.5"><path d="M1 20V7c0-4 2-6 6-6h12v19" strokeWidth="1.800" /></Icon>
          <Field label="左上半径" value="0 像素" className="ml-1.5 h-[21px] w-[68px]" />
          <Field label="右上半径" value="0 像素" className="h-[21px] w-[68px]" />
          <Icon className="size-3.5"><path d="M1 20V1h12c4 0 6 2 6 6v13" strokeWidth="1.800" /></Icon>
        </div>
      </div>
      <div className="mt-1 mb-6 flex w-4 flex-col items-center bg-[#4a4a4a] text-[#9a9a9a]">
        <ChevronUp className="my-0.5 size-3" />
        <div className="w-3 flex-1 bg-[#696969]" />
        <ChevronDown className="my-1 size-3" />
      </div>
    </div>
    <div className="h-2.5 shrink-0 border-y-2 border-[#3c3c3c]" />
  </section>
);

type ValueProps = { name: string; value: string; unit?: string; checked?: boolean };

const RadioValue = ({ name, value, unit, checked = false }: ValueProps) => (
  <div className="flex items-center">
    <label className="flex w-[46px] items-center gap-1.5">
      <input
        type="radio"
        name="channel"
        defaultChecked={checked}
        className="size-[13px] appearance-none rounded-full border border-[#7a7a7a] bg-[#4b4b4b] checked:border-4 checked:border-[#dedede] checked:bg-[#222222]"
      />
      {name}:
    </label>
    <input
      aria-label={name}
      defaultValue={value}
      className={`h-[22px] border border-[#666666] bg-[#454545] px-1 text-[#ececec] outline-none ${unit ? 'w-[35px]' : 'w-[43px]'}`}
    />
    {unit && <span className="ml-1.5">{unit}</span>}
  </div>
);

const InkValue = ({ name, value }: ValueProps) => (
  <label className="flex items-center justify-end">
    {name}:
    <input defaultValue={value} className="ml-1.5 h-[22px] w-[35px] border border-[#666666] bg-[#454545] px-1 text-[#ececec] outline-none" />
    <span className="ml-[7px] w-3.5">%</span>
  </label>
);

const dialogButton = 'h-[26px] rounded-full border text-white';

const ColorPicker = () => (
  <div
    role="dialog"
    aria-label="拾色器（纯色）"
    className="absolute top-[593px] left-[1055px] w-[537px] border border-[#2b7fc0] bg-[#535353] text-[#dedede] shadow-lg shadow-black/40"
  >
    <div className="flex h-[30px] items-center justify-between bg-white px-[7px] text-black">
      <span>拾色器（纯色）</span>
      <button aria-label="关闭"><X className="size-4" strokeWidth={1.5} /></button>
    </div>
    <div className="flex h-[371px] pl-2.5">
      <div className="pt-[31px]">
        <div className="flex">
          <div className="relative size-64 overflow-hidden bg-[#cc1cff] bg-[linear-gradient(to_top,#000,transparent),linear-gradient(to_right,#fff,transparent)]">
            <span className="absolute top-[22px] left-[203px] size-4 rounded-full border border-[#222222]" />
            <span className="absolute top-[224px] -left-[5px] size-[11px] rounded-full border border-white" />
          </div>
          <div className="relative ml-3 h-64 w-[19px] bg-[linear-gradient(to_bottom,#ff1600,#ff20ff_18%,#0a00ff_33%,#00e8ff_50%,#00d200_67%,#fff000_83%,#ff1600)]">
            <svg viewBox="0 0 8 8" className="absolute top-12 -left-2.5 size-2" fill="#e8e8e8" aria-hidden="true"><path d="M1 0h2l5 4-5 4H1z" /></svg>
            <svg viewBox="0 0 8 8" className="absolute top-12 -right-2.5 size-2" fill="#e8e8e8" aria-hidden="true"><path d="M7 0H5L0 4l5 4h2z" /></svg>
          </div>
        </div>
        <label className="mt-3 flex items-center gap-2">
          <input type="checkbox" className="size-[13px] appearance-none rounded-xs border border-[#7a7a7a] bg-[#4b4b4b]" />
          <span>只有 Web 颜色</span>
        </label>
      </div>
      <div className="min-w-0 flex-1 pt-2.5 pr-2.5 pl-[13px]">
        <div className="flex h-[156px] justify-between">
          <div className="flex items-end gap-2 pb-8">
            <div className="w-[61px] text-center">
              <div className="h-[18px]">新的</div>
              <div className="h-[68px] bg-[#1a1a1a]" />
              <div className="h-[18px]">当前</div>
            </div>
            <div className="mb-[18px] flex flex-col items-center gap-1">
              <CubeIcon />
              <span className="size-3 border border-white bg-[#333333]" />
            </div>
          </div>
          <div className="flex w-[106px] flex-col">
            <button className={`${dialogButton} border-[#cccccc]`}>确定</button>
            <button className={`${dialogButton} mt-2 border-[#727272]`}>取消</button>
            <button className={`${dialogButton} mt-[15px] border-[#727272]`}>添加到色板</button>
            <button className={`${dialogButton} mt-4 border-[#727272]`}>颜色库</button>
          </div>
        </div>
        <div className="flex justify-between pt-[3px]">
          <div className="flex flex-col gap-[5px]">
            <RadioValue name="H" value="287" unit="度" checked />
            <RadioValue name="S" value="0" unit="%" />
            <RadioValue name="B" value="10" unit="%" />
            <div className="mt-1 flex flex-col gap-[5px]">
              <RadioValue name="R" value="26" unit=" " />
              <RadioValue name="G" value="26" unit=" " />
              <RadioValue name="B" value="26" unit=" " />
            </div>
            <label className="mt-1 flex items-center">
              <span className="w-[18px] pl-1">#</span>
              <span className="flex h-[22px] w-20 items-center border border-[#2464b4] bg-[#454545] pl-1">
                <input defaultValue="1a1a1a" className="h-4 w-10 bg-[#0a6fd0] text-white outline-none" />
              </span>
            </label>
          </div>
          <div className="flex w-[103px] flex-col gap-[5px]">
            <RadioValue name="L" value="9" />
            <RadioValue name="a" value="0" />
            <RadioValue name="b" value="0" />
            <div className="mt-1 flex flex-col gap-[5px]">
              <InkValue name="C" value="84" />
              <InkValue name="M" value="80" />
              <InkValue name="Y" value="79" />
              <InkValue name="K" value="66" />
            </div>
          </div>
        </div>
      </div>
    </div>
  </div>
);

const QR_SIZE = 37;

const inFinder = (x: number, y: number) =>
  (x < 8 && y < 8) || (x > QR_SIZE - 9 && y < 8) || (x < 8 && y > QR_SIZE - 9);

const qrModules = () => {
  let path = '';
  let seed = 1671;
  for (let y = 0; y < QR_SIZE; y++) {
    for (let x = 0; x < QR_SIZE; x++) {
      seed = (seed * 16807) % 2147483647;
      const inAlign = x > 27 && x < 33 && y > 27 && y < 33;
      if (!inFinder(x, y) && !inAlign && seed % 100 < 52) path += `M${x} ${y}h1v1h-1z`;
    }
  }
  return path;
};

const Finder = ({ x, y }: { x: number; y: number }) => (
  <g transform={`translate(${x} ${y})`}>
    <path d="M0 0h7v7H0zM1 1v5h5V1z" fillRule="evenodd" />
    <path d="M2 2h3v3H2z" />
  </g>
);

const ContactCard = () => (
  <div className="absolute bottom-0 left-0 flex h-[157px] w-[329px] items-center bg-[#fdfdfd] pl-[18px] font-['Noto_Sans_CJK_SC',sans-serif] text-black">
    <div className="relative size-[120px]">
      <svg viewBox="0 0 37 37" className="size-full" shapeRendering="crispEdges" aria-hidden="true">
        <path d={qrModules()} />
        <Finder x={0} y={0} />
        <Finder x={30} y={0} />
        <Finder x={0} y={30} />
        <path d="M28 28h5v5h-5zM29 29v3h3v-3zM30 30h1v1h-1z" fillRule="evenodd" />
      </svg>
      <div className="absolute top-[45px] left-[45px] flex size-[30px] flex-col items-center justify-center rounded-sm border border-white bg-[#fcc30b]">
        <span className="text-[7px] leading-2 font-black whitespace-nowrap">UI.平面</span>
        <span className="mt-0.5 flex gap-1">
          <i className="size-px bg-black" />
          <i className="size-px bg-black" />
          <i className="size-px bg-black" />
          <i className="size-px bg-black" />
        </span>
      </div>
    </div>
    <div className="ml-[19px] whitespace-nowrap">
      <div className="text-[52px] leading-[58px] font-black">联系我</div>
      <div className="text-[22px] leading-7 font-medium">系统学习UI设计</div>
      <div className="text-[26px] leading-9 text-[#d8161c]">[微信:UI1671]</div>
    </div>
  </div>
);

const App = () => {
  return (
    <div className="relative flex h-screen flex-col overflow-hidden bg-[#535353] font-['Open_Sans','Noto_Sans_CJK_SC',sans-serif] text-xs">
      <MenuBar />
      <OptionsBar />
      <div className="flex min-h-0 flex-1">
        <ToolBar />
        <Canvas />
        <div className="w-[3px] shrink-0 bg-[#383838]" />
        <IconDock />
        <aside className="flex w-[244px] shrink-0 flex-col border-r border-[#383838]">
          <div className="flex h-[13px] shrink-0 items-center justify-end border-b border-[#383838] bg-[#424242] pr-1.5"><DoubleArrow /></div>
          <CharacterPanel />
          <LayersPanel />
        </aside>
      </div>

      {/* Floating panels */}
      <PropertiesPanel />
      <ColorPicker />
      <ContactCard />
    </div>
  );
};

export default App;
